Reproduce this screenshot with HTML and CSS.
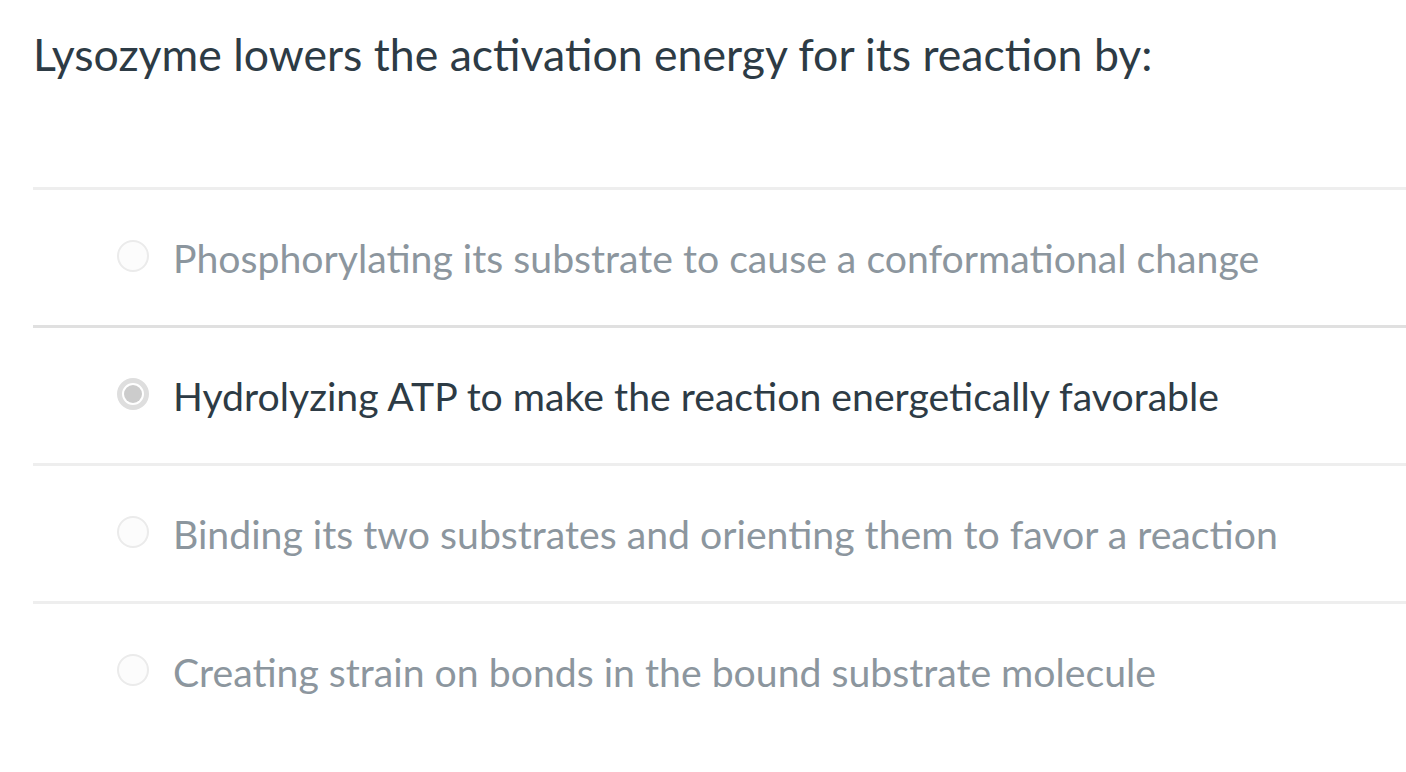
FILE: index.html
```html
<!DOCTYPE html>
<html>
<head>
<meta charset="utf-8">
<link rel="stylesheet" href="styles.css">
</head>
<body>
<div class="quiz">
  <h1 class="question">Lysozyme lowers the activation energy for its reaction by:</h1>
  <ul class="answers">
    <li class="answer"><span class="radio"></span><span class="label">Phosphorylating its substrate to cause a conformational change</span></li>
    <li class="answer selected"><span class="radio"></span><span class="label">Hydrolyzing ATP to make the reaction energetically favorable</span></li>
    <li class="answer"><span class="radio"></span><span class="label">Binding its two substrates and orienting them to favor a reaction</span></li>
    <li class="answer"><span class="radio"></span><span class="label">Creating strain on bonds in the bound substrate molecule</span></li>
  </ul>
</div>
</body>
</html>
```
FILE: styles.css
```css
html, body {
  margin: 0;
  padding: 0;
  background: #ffffff;
}
body {
  font-family: Lato, "Open Sans", sans-serif;
}
.quiz {
  padding-left: 33px;
}
.question {
  margin: 0;
  padding-top: 26px;
  font-weight: 400;
  font-size: 44.6px;
  line-height: 56px;
  color: #2d3b45;
  height: 187px;
  box-sizing: border-box;
}
.answers {
  list-style: none;
  margin: 0;
  padding: 0;
}
.answer {
  display: flex;
  align-items: center;
  height: 135px;
  border-top: 3px solid #eeeeee;
  padding-left: 84px;
}
.answer.selected {
  border-top-color: #e0e0e0;
}
.radio {
  width: 32px;
  height: 32px;
  border: 2px solid #ebebeb;
  background: #fcfcfc;
  border-radius: 50%;
  box-sizing: border-box;
  flex: none;
  margin-right: 24px;
  margin-top: -3px;
  position: relative;
}
.selected .radio {
  border: 5px solid #dedede;
  background: #ffffff;
}
.selected .radio::after {
  content: "";
  position: absolute;
  left: 2px;
  top: 2px;
  width: 18px;
  height: 18px;
  border-radius: 50%;
  background: #cccccc;
}
.label {
  font-size: 39.2px;
  line-height: 48px;
  color: #8c969e;
}
.selected .label {
  color: #2d3b45;
}
```
